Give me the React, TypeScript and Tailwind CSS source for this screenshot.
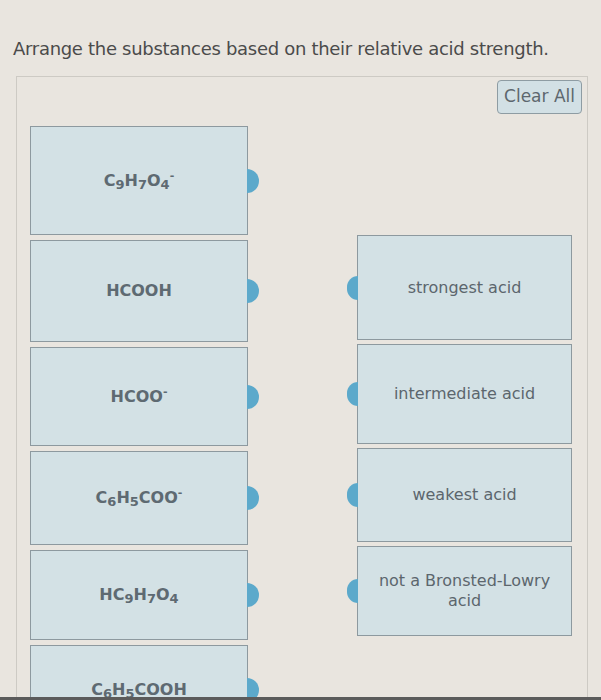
import React from 'react';

type Formula = { parts: Array<[string, 'n' | 'sub' | 'sup']>; h: string };

const substances: Formula[] = [
  { parts: [['C', 'n'], ['9', 'sub'], ['H', 'n'], ['7', 'sub'], ['O', 'n'], ['4', 'sub'], ['-', 'sup']], h: 'h-[109px]' },
  { parts: [['HCOOH', 'n']], h: 'h-[102px]' },
  { parts: [['HCOO', 'n'], ['-', 'sup']], h: 'h-[99px]' },
  { parts: [['C', 'n'], ['6', 'sub'], ['H', 'n'], ['5', 'sub'], ['COO', 'n'], ['-', 'sup']], h: 'h-[94px]' },
  { parts: [['HC', 'n'], ['9', 'sub'], ['H', 'n'], ['7', 'sub'], ['O', 'n'], ['4', 'sub']], h: 'h-[90px]' },
  { parts: [['C', 'n'], ['6', 'sub'], ['H', 'n'], ['5', 'sub'], ['COOH', 'n']], h: 'h-[90px]' },
];

const ranks = [
  { label: 'strongest acid', h: 'h-[105px]' },
  { label: 'intermediate acid', h: 'h-[100px]' },
  { label: 'weakest acid', h: 'h-[94px]' },
  { label: 'not a Bronsted-Lowry acid', h: 'h-[90px]' },
];

function FormulaText({ parts }: { parts: Formula['parts'] }) {
  return (
    <span className="font-bold text-[16px] text-[#5e6a72]">
      {parts.map(([t, kind], i) =>
        kind === 'sub' ? (
          <sub key={i} className="text-[13px] relative top-[3px]">{t}</sub>
        ) : kind === 'sup' ? (
          <sup key={i} className="text-[11px] relative -top-[7px]">{t}</sup>
        ) : (
          <span key={i}>{t}</span>
        )
      )}
    </span>
  );
}

export default function App() {
  return (
    <div
      className="relative w-[601px] h-[700px] overflow-hidden bg-[#e9e5df] flex flex-col"
      style={{ fontFamily: '"DejaVu Sans", Verdana, sans-serif' }}
    >
      <h1 className="pt-[37px] pl-[13px] text-[18px] leading-[24px] text-[#4b4b4b] font-normal tracking-[-0.3px]">
        Arrange the substances based on their relative acid strength.
      </h1>

      <div className="mt-[15px] ml-[16px] mr-[13px] flex-1 border border-b-0 border-[#cdcac4] flex flex-col">
        <div className="flex justify-end pt-[3px] pr-[5px]">
          <button className="h-[34px] px-[6px] rounded-[4px] border border-[#8e9ca3] bg-[#d2e0e5] text-[17px] text-[#5d676e]">
            Clear All
          </button>
        </div>

        <div className="flex pl-[13px]">
          <div className="w-[218px] mt-[12px] flex flex-col gap-[5px]">
            {substances.map((s, i) => (
              <div
                key={i}
                className={`relative ${s.h} shrink-0 bg-[#d3e1e5] border border-[#8d999f] flex items-center justify-center`}
              >
                <FormulaText parts={s.parts} />
                <span className="absolute left-full top-1/2 -translate-y-1/2 w-[12px] h-[24px] rounded-r-full bg-[#5ca9cb]" />
              </div>
            ))}
          </div>

          <div className="w-[215px] ml-[109px] mt-[121px] flex flex-col gap-[4px]">
            {ranks.map((r) => (
              <div
                key={r.label}
                className={`relative ${r.h} shrink-0 bg-[#d3e1e5] border border-[#8d999f] flex items-center justify-center px-[14px] text-center text-[16px] leading-[20px] text-[#5c666d]`}
              >
                {r.label}
                <span className="absolute right-full top-1/2 -translate-y-1/2 w-[11px] h-[24px] rounded-l-full bg-[#5ca9cb]" />
              </div>
            ))}
          </div>
        </div>
      </div>

      <div className="absolute bottom-0 left-0 right-0 h-[3px] bg-[#5b5b5b]" />
    </div>
  );
}
